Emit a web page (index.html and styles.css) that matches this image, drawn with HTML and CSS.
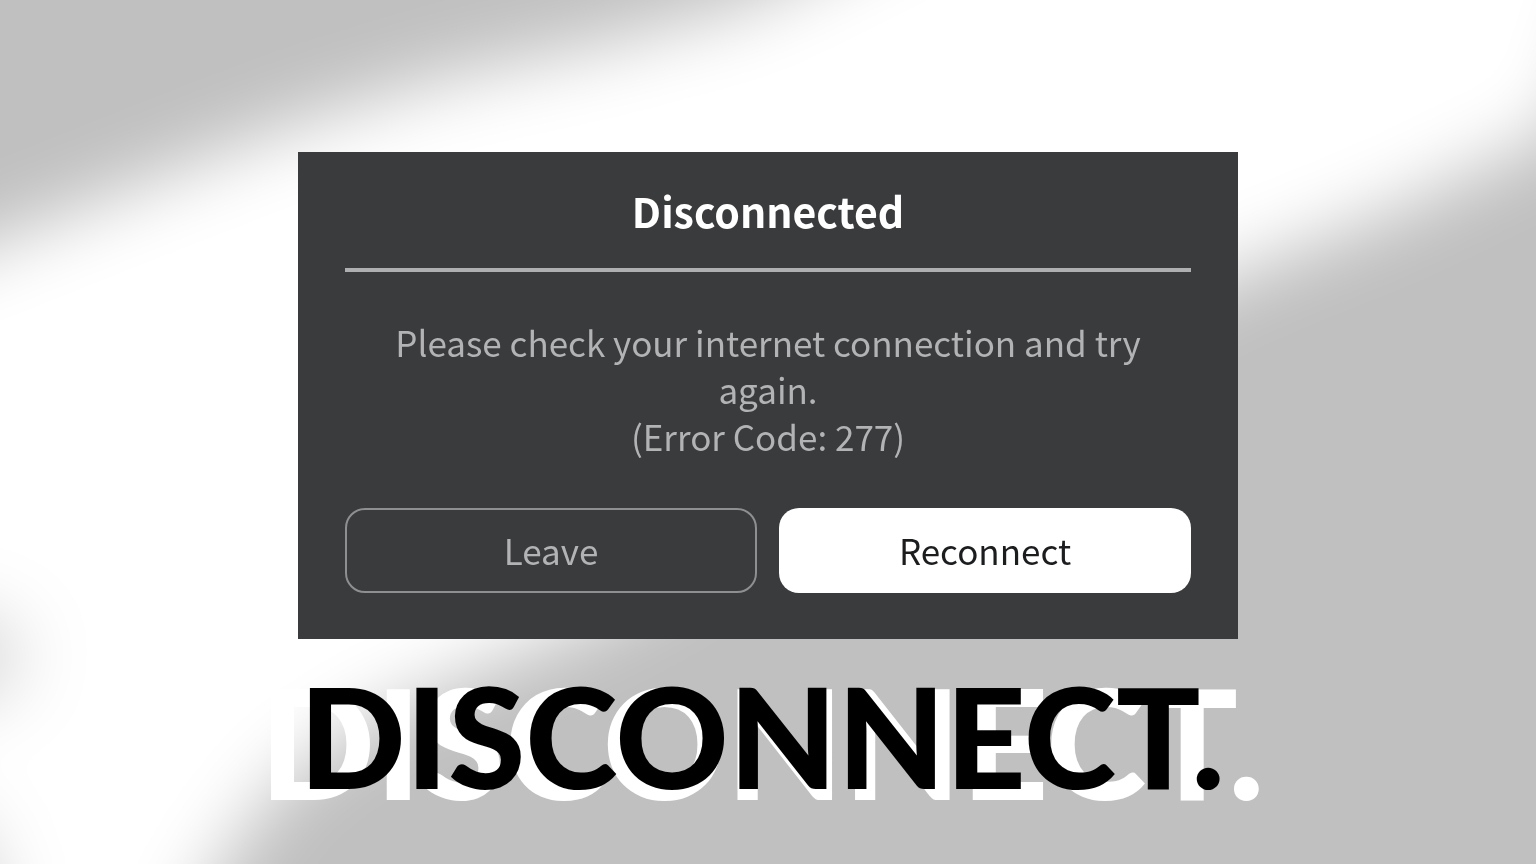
FILE: index.html
```
<!DOCTYPE html>
<html lang="en">
  <head>
    <meta charset="utf-8">
    <title>Disconnected</title>
    <link rel="stylesheet" href="styles.css">
  </head>
  <body>
    <svg class="backdrop" viewBox="0 0 1536 864" preserveAspectRatio="none" aria-hidden="true">
      <defs>
        <filter id="soft" x="-20%" y="-20%" width="140%" height="140%" color-interpolation-filters="sRGB">
          <feGaussianBlur stdDeviation="37" />
        </filter>
      </defs>
      <rect width="1536" height="864" fill="#c0c0c0" />
      <g filter="url(#soft)">
        <path fill="#fff" d="M-150 300 L0 240 L150 180 L300 122 L450 76 L600 44 L750 4 L1000 -120 L1640 -120 L1590 40 L1560 130 L1390 212 L1240 272 L900 450 L600 620 L470 674 L370 720 L290 775 L230 850 L160 980 L-150 980 Z" />
        <path fill="#d0d0d0" d="M-120 600 L0 625 L24 650 L0 690 L-120 720 Z" />
        <path fill="#d0d0d0" d="M-120 800 L-30 820 L0 900 L0 980 L-120 980 Z" />
      </g>
    </svg>

    <main class="page">
      <section class="dialog" role="dialog" aria-labelledby="dialog-title">
        <h1 id="dialog-title" class="dialog-title">Disconnected</h1>
        <p class="message">Please check your internet connection and try again.<br>(Error Code: 277)</p>
        <div class="actions">
          <button type="button" class="button leave">Leave</button>
          <button type="button" class="button reconnect">Reconnect</button>
        </div>
      </section>
      <div class="wordmark" data-text="DISCONNECT.">DISCONNECT.</div>
    </main>
  </body>
</html>
```
FILE: styles.css
```
* {
  box-sizing: border-box;
}
body {
  margin: 0;
  background-color: #c0c0c0;
  font-family: "Noto Sans CJK JP", "Noto Sans", sans-serif;
  overflow-x: hidden;
}
.backdrop {
  position: fixed;
  top: 0;
  left: 0;
  width: 100%;
  height: 100%;
  z-index: -1;
}
.page {
  min-height: 100vh;
  padding: 152px 24px 0;
  display: flex;
  flex-direction: column;
  align-items: center;
}
.dialog {
  width: 100%;
  max-width: 940px;
  padding: 30px 47px 46px;
  background-color: #3a3b3d;
  text-align: center;
}
.dialog-title {
  margin: 0;
  padding-bottom: 30px;
  border-bottom: 4px solid #aeafb0;
  color: #fff;
  font-size: 41px;
  line-height: 56px;
  font-weight: 600;
}
.message {
  margin: 0;
  padding: 46px 32px 49px;
  color: #b2b3b4;
  font-size: 35px;
  line-height: 47px;
}
.actions {
  display: grid;
  grid-template-columns: 1fr 1fr;
  gap: 22px;
}
.button {
  height: 85px;
  padding: 0 0 2px;
  border-radius: 20px;
  font-family: inherit;
  font-size: 35px;
  cursor: pointer;
}
.leave {
  background-color: transparent;
  border: 2px solid #8e8f90;
  color: #b2b3b4;
}
.reconnect {
  background-color: #fff;
  border: none;
  color: #1c1d1f;
}
.wordmark {
  position: relative;
  margin-top: 28px;
  padding-right: 12px;
  color: #000;
  font-family: Lato, sans-serif;
  font-size: 140px;
  line-height: 136px;
  font-weight: 900;
  white-space: nowrap;
}
/* larger white copy behind the black letters */
.wordmark::before {
  content: attr(data-text);
  position: absolute;
  top: 6px;
  left: 50%;
  transform: translateX(-50%);
  z-index: -1;
  padding-right: 12px;
  color: #fff;
  font-size: 152px;
}
```
